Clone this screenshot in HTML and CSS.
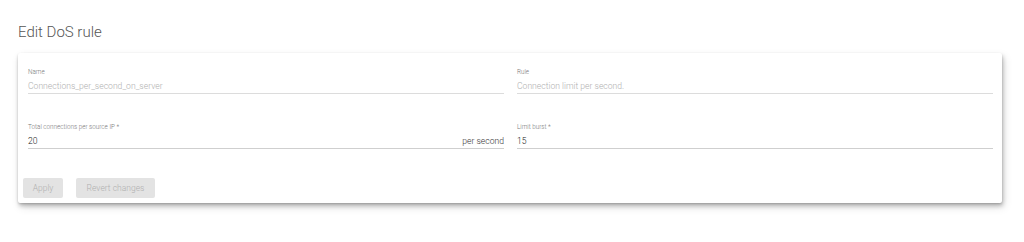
FILE: index.html
```html
<!DOCTYPE html>
<html lang="en">
<head>
  <meta charset="UTF-8" />
  <title>Edit DoS rule</title>
  <link rel="stylesheet" href="styles.css">
</head>
<body>
  <h1 class="page-title">Edit DoS rule</h1>

  <section class="card">
    <div class="row">
      <div class="field disabled">
        <label>Name</label>
        <div class="input"><span>Connections_per_second_on_server</span></div>
      </div>
      <div class="field disabled">
        <label>Rule</label>
        <div class="input"><span>Connection limit per second.</span></div>
      </div>
    </div>

    <div class="row">
      <div class="field">
        <label>Total connections per source IP *</label>
        <div class="input"><span>20</span><span class="suffix">per second</span></div>
      </div>
      <div class="field">
        <label>Limit burst *</label>
        <div class="input"><span>15</span></div>
      </div>
    </div>

    <div class="actions">
      <button class="btn apply" disabled>Apply</button>
      <button class="btn revert" disabled>Revert changes</button>
    </div>
  </section>
</body>
</html>
```

FILE: styles.css
```css
body {
  margin: 0;
  padding: 0 22px 20px 18px;
  background: #fff;
  font-family: Roboto, "Liberation Sans", sans-serif;
  color: #333;
}
.page-title {
  margin: 0;
  padding-top: 23px;
  height: 30px;
  font-size: 15px;
  font-weight: 300;
  line-height: 18px;
  color: #555;
}
.card {
  background: #fff;
  border-radius: 2px;
  box-shadow: 0 1px 2px rgba(0,0,0,0.15), 1px 3px 4px rgba(0,0,0,0.22), 2px 4px 10px rgba(0,0,0,0.12);
  padding: 15px 9px 5px 5px;
  height: 150px;
  box-sizing: border-box;
}
.row {
  display: grid;
  grid-template-columns: 1fr 1fr;
  column-gap: 13px;
  padding-left: 5px;
  margin-bottom: 29px;
}
.field label {
  display: block;
  font-size: 6.3px;
  font-weight: 300;
  line-height: 8px;
  color: #777;
  margin-bottom: 2px;
}
.field .input {
  display: flex;
  justify-content: space-between;
  align-items: center;
  height: 15px;
  font-size: 8.6px;
  font-weight: 300;
  color: #222;
  border-bottom: 1px solid #cfcfcf;
}
.field.disabled .input {
  color: #b0b0b0;
  border-bottom-color: #dcdcdc;
}
.suffix { color: #333; }
.actions {
  display: flex;
  gap: 13px;
}
.btn {
  height: 20px;
  padding: 0 9px;
  border: none;
  border-radius: 2px;
  background: #e3e3e3;
  color: #b0b0b0;
  font-family: inherit;
  font-size: 8.5px;
  font-weight: 300;
}
.apply { width: 40px; }
.revert { width: 79px; }
```
